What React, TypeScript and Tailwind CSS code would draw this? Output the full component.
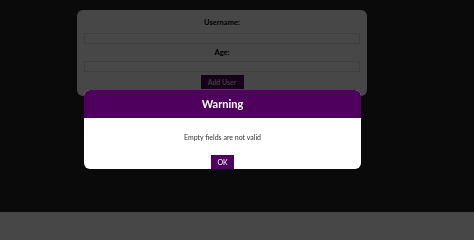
export default function App() {
  return (
    <div className="h-[212px] overflow-hidden bg-[#262626] pt-[10px] font-['Lato','Noto_Sans',sans-serif]">
      {/* Add user form card */}
      <div className="mx-auto w-[290px] rounded-[6px] bg-white px-[7px] pt-[8px] pb-[7px] translate-x-[-15px]">
        <form className="flex flex-col items-stretch">
          <label className="block text-center text-[7.5px] font-bold leading-[9px] text-black">Username:</label>
          <input className="mt-[6px] h-[11px] w-full border border-[#e2e2e2]" />
          <label className="mt-[4px] block text-center text-[7.5px] font-bold leading-[9px] text-black">Age:</label>
          <input className="mt-[4px] h-[11px] w-full border border-[#e2e2e2]" />
          <button
            type="button"
            className="mx-auto mt-[3px] h-[14px] w-[43px] bg-[#4f005f] text-[7px] leading-none text-white"
          >
            Add User
          </button>
        </form>
      </div>

      {/* Backdrop */}
      <div className="fixed inset-0 bg-black/[0.72]" />

      {/* Error modal */}
      <div className="fixed left-[84px] top-[90px] w-[277px] overflow-hidden rounded-[6px] bg-white">
        <header className="flex h-[28px] items-center justify-center bg-[#4f005f]">
          <h2 className="text-[11px] font-bold text-white">Warning</h2>
        </header>
        <div className="pt-[15px] text-center text-[7px] leading-[8px] text-[#333]">
          Empty fields are not valid
        </div>
        <footer className="mt-[14px] flex justify-center">
          <button
            type="button"
            className="h-[14px] w-[23px] bg-[#4f005f] text-[7px] leading-none text-white"
          >
            OK
          </button>
        </footer>
      </div>
    </div>
  );
}
